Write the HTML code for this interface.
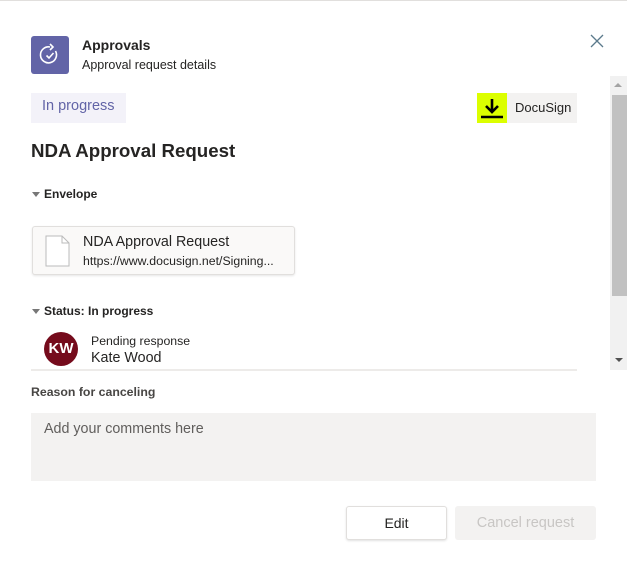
<!DOCTYPE html>
<html><head><style>
*{margin:0;padding:0;box-sizing:border-box}
body{width:627px;height:569px;background:#fff;font-family:"Segoe UI","Liberation Sans",sans-serif;color:#252423;position:relative;overflow:hidden;border-top:1px solid #e1dfdd}
.a{position:absolute}
</style></head><body>
<div class="a" style="left:31px;top:35px;width:38px;height:38px;background:#6264a7;border-radius:3px">
<svg width="38" height="38" viewBox="0 0 38 38"><path d="M24.5 15 A8 8 0 1 1 19 11" fill="none" stroke="#fff" stroke-width="1.6"/><path d="M19 8 L22 11 L19 14" fill="none" stroke="#fff" stroke-width="1.6"/><path d="M15.5 19.5 L18 22 L22.5 17" fill="none" stroke="#fff" stroke-width="1.6"/></svg></div>
<div class="a" style="left:82px;top:36px;font-size:14px;font-weight:bold">Approvals</div>
<div class="a" style="left:82px;top:57px;font-size:12.5px">Approval request details</div>
<svg class="a" style="left:590px;top:33px" width="14" height="14"><path d="M1 1L13 13M13 1L1 13" stroke="#5b7a8c" stroke-width="1.3"/></svg>
<div class="a" style="left:31px;top:92px;width:95px;height:30px;background:#f3f2f9;color:#6264a7;font-size:14.5px;line-height:27px;padding-left:11px">In progress</div>
<div class="a" style="left:477px;top:92px;width:100px;height:30px;background:#f3f2f1"></div>
<div class="a" style="left:477px;top:92px;width:30px;height:30px;background:#dcff00">
<svg width="30" height="30"><path d="M15 6V19M9 13L15 19L21 13" fill="none" stroke="#000" stroke-width="2.6"/><path d="M4 24H26" stroke="#000" stroke-width="2.6"/></svg></div>
<div class="a" style="left:515px;top:99px;font-size:13px">DocuSign</div>
<div class="a" style="left:31px;top:139px;font-size:18.7px;font-weight:bold">NDA Approval Request</div>
<div class="a" style="left:32px;top:191px;width:0;height:0;border-left:4px solid transparent;border-right:4px solid transparent;border-top:5px solid #777"></div>
<div class="a" style="left:44px;top:186px;font-size:12px;font-weight:bold">Envelope</div>
<div class="a" style="left:32px;top:225px;width:263px;height:49px;border:1px solid #e1dfdd;border-radius:3px;background:#faf9f8;box-shadow:0 1px 2px rgba(0,0,0,.1)"></div>
<svg class="a" style="left:45px;top:234px" width="26" height="32"><path d="M1 1H17L24 8V31H1Z" fill="#fff" stroke="#bbb"/><path d="M17 1V8H24" fill="none" stroke="#bbb"/></svg>
<div class="a" style="left:83px;top:233px;font-size:14.3px">NDA Approval Request</div>
<div class="a" style="left:83px;top:253px;font-size:12.3px">https://www.docusign.net/Signing...</div>
<div class="a" style="left:32px;top:308px;width:0;height:0;border-left:4px solid transparent;border-right:4px solid transparent;border-top:5px solid #777"></div>
<div class="a" style="left:44px;top:303px;font-size:12px;font-weight:bold">Status: In progress</div>
<div class="a" style="left:44px;top:331px;width:34px;height:34px;border-radius:50%;background:#750b1c;color:#fff;font-size:15px;font-weight:bold;text-align:center;line-height:34px">KW</div>
<div class="a" style="left:91px;top:333px;font-size:12.3px">Pending response</div>
<div class="a" style="left:91px;top:349px;font-size:14.3px">Kate Wood</div>
<div class="a" style="left:31px;top:368px;width:546px;height:2px;background:#edebe9"></div>
<div class="a" style="left:610px;top:75px;width:17px;height:294px;background:#f1f1f1"></div>
<div class="a" style="left:612px;top:94px;width:15px;height:201px;background:#c1c1c1"></div>
<div class="a" style="left:614px;top:82px;width:0;height:0;border-left:4px solid transparent;border-right:4px solid transparent;border-bottom:4px solid #a3a3a3"></div>
<div class="a" style="left:615px;top:357px;width:0;height:0;border-left:4px solid transparent;border-right:4px solid transparent;border-top:4px solid #505050"></div>
<div class="a" style="left:31px;top:384px;font-size:12.3px;font-weight:bold;color:#484644">Reason for canceling</div>
<div class="a" style="left:31px;top:412px;width:565px;height:68px;background:#f3f2f1;padding:8px 13px;font-size:14.3px;color:#605e5c">Add your comments here</div>
<div class="a" style="left:346px;top:505px;width:101px;height:34px;border:1px solid #e1dfdd;border-radius:3px;background:#fff;box-shadow:0 1px 2px rgba(0,0,0,.12);font-size:14px;text-align:center;line-height:32px">Edit</div>
<div class="a" style="left:455px;top:505px;width:141px;height:34px;border-radius:3px;background:#f3f2f1;color:#c8c6c4;font-size:14.5px;text-align:center;line-height:34px">Cancel request</div>
</body></html>
